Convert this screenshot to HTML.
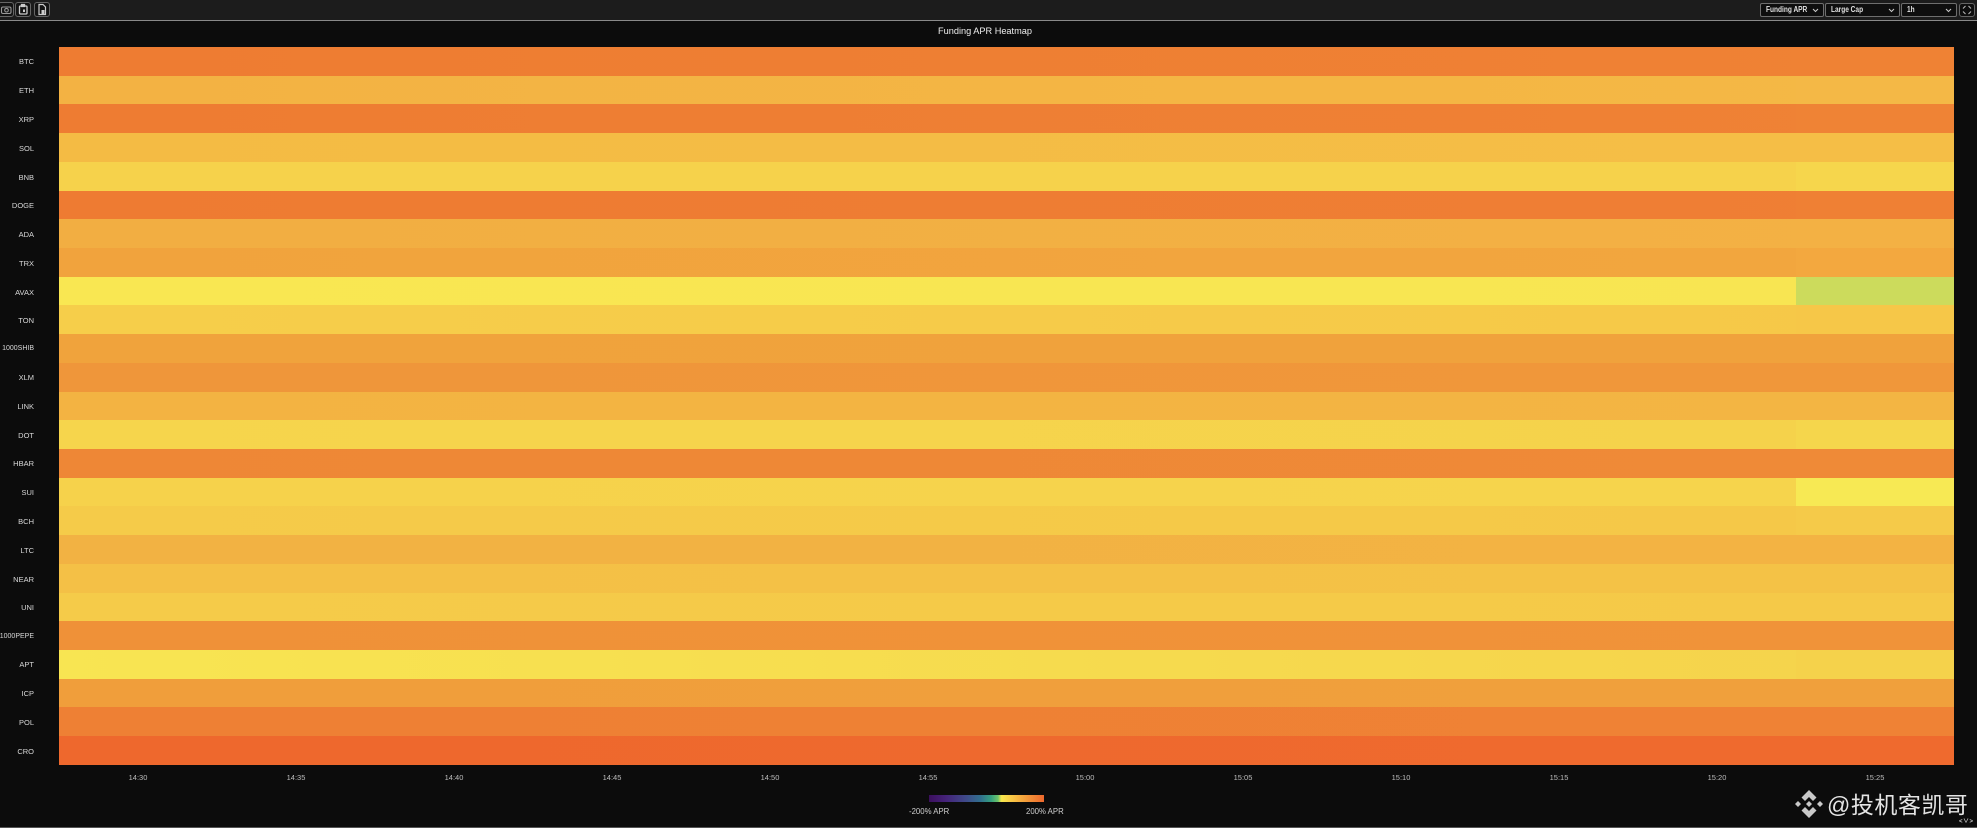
<!DOCTYPE html>
<html><head><meta charset="utf-8"><style>
html,body{margin:0;padding:0;background:#0c0c0c}
body{width:1977px;height:828px;position:relative;overflow:hidden;font-family:"Liberation Sans","Noto Sans CJK SC",sans-serif;color:#ddd}
.top{position:absolute;left:0;top:0;width:1977px;height:20px;background:#1c1c1c;border-bottom:1px solid #8a8a8a;box-sizing:content-box}
.btn{position:absolute;top:2px;height:13px;width:14px;border:1px solid #666;border-radius:3px;background:#141414}
.btn svg{position:absolute;left:0;top:0}
.dd{position:absolute;top:3px;height:12px;border:1px solid #6e6e6e;border-radius:2px;background:#0e0e0e;font-size:8px;line-height:12px;font-weight:bold;color:#e0e0e0;padding-left:5px;box-sizing:content-box}
.dd span{display:inline-block;transform:scaleX(.82);transform-origin:left center;white-space:nowrap}
.dd svg{position:absolute;top:4px}
.title{position:absolute;left:885px;width:200px;top:25px;text-align:center;font-size:9.2px;line-height:13px;color:#efefef}
.hm{position:absolute;left:59px;top:47px;width:1895px;height:718px}
.r{position:absolute;left:0;width:1895px;height:29px}
.r i{position:absolute;right:0;top:0;width:158px;height:100%;display:block}
.l{position:absolute;right:1943px;font-size:7.5px;line-height:10px;color:#d8d8d8;white-space:nowrap}
.t{position:absolute;top:773px;width:40px;text-align:center;font-size:7.5px;line-height:10px;color:#bdbdbd}
.leg{position:absolute;left:929px;top:795px;width:115px;height:7px;background:linear-gradient(90deg,#3c0f5e 0%,#45237a 15%,#3f4a8a 32%,#31708e 45%,#35a07f 54%,#6cc46a 60%,#f8e84e 63%,#f9c846 72%,#f39a3a 85%,#ee682d 100%)}
.ll{position:absolute;top:807px;font-size:7.8px;line-height:10px;color:#cfcfcf;white-space:nowrap}
.wm{position:absolute;left:1827px;top:790px;font-size:23px;line-height:30px;color:#e4e4e4;white-space:nowrap;letter-spacing:.5px}
.bot{position:absolute;left:0;top:827px;width:1977px;height:1px;background:#555}
.nav{position:absolute;left:1959px;top:818px;font-size:6px;line-height:8px;color:#ccc;font-weight:bold;letter-spacing:.5px}
</style></head><body>
<div class="top"></div>
<div class="btn" style="left:-2px"><svg width="14" height="13" viewBox="0 0 14 13" fill="none" stroke="#999" stroke-width="1.1"><rect x="2.500" y="4" width="9.500" height="6.500" rx="1.500"/><circle cx="7.500" cy="7.200" r="1.800"/></svg></div>
<div class="btn" style="left:15px"><svg width="14" height="13" viewBox="0 0 14 13" fill="none" stroke="#ccc" stroke-width="1.3"><rect x="3.500" y="3" width="7.500" height="8" rx="1"/><path d="M5.500 1.500h3v2h-3z" fill="#ccc"/><path d="M7 6.500h2v2.500H7z" fill="#ccc" stroke="none"/></svg></div>
<div class="btn" style="left:34px"><svg width="14" height="13" viewBox="0 0 14 13" fill="none" stroke="#ccc" stroke-width="1.2"><path d="M4 1.500h4l2.500 2.500v7.500H4z"/><path d="M6.500 7h3v4h-3z" fill="#ccc" stroke="none"/></svg></div>

<div class="dd" style="left:1760px;width:57px"><span>Funding APR</span><svg style="left:51px" width="7" height="5" viewBox="0 0 7 5" fill="none" stroke="#ccc" stroke-width="1"><path d="M1 1l2.500 2.500L6 1"/></svg></div>
<div class="dd" style="left:1825px;width:68px"><span>Large Cap</span><svg style="left:62px" width="7" height="5" viewBox="0 0 7 5" fill="none" stroke="#ccc" stroke-width="1"><path d="M1 1l2.500 2.500L6 1"/></svg></div>
<div class="dd" style="left:1901px;width:49px"><span>1h</span><svg style="left:43px" width="7" height="5" viewBox="0 0 7 5" fill="none" stroke="#ccc" stroke-width="1"><path d="M1 1l2.500 2.500L6 1"/></svg></div>
<div class="btn" style="left:1959px;top:3px;height:12px;background:#0e0e0e"><svg width="14" height="12" viewBox="0 0 14 12" fill="none" stroke="#bbb" stroke-width="1"><path d="M3 4.500l2.500-2.500M8.500 2L11 4.500M3 7.500L5.500 10M11 7.500L8.500 10"/></svg></div>

<div class="title">Funding APR Heatmap</div>

<div class="hm">
<div class="r" style="top:0;height:29px;background:linear-gradient(90deg,#ee7c32,#ef8234)"><i style="background:#ef8234"></i></div>
<div class="r" style="top:29px;background:linear-gradient(90deg,#f3b243,#f4b845)"><i style="background:#f4b846"></i></div>
<div class="r" style="top:57px;background:linear-gradient(90deg,#ee7c32,#ef8235)"><i style="background:#ef8335"></i></div>
<div class="r" style="top:86px;background:linear-gradient(90deg,#f4bb44,#f5be46)"><i style="background:#f5be46"></i></div>
<div class="r" style="top:115px;background:linear-gradient(90deg,#f6d24b,#f6d24b)"><i style="background:#f6d64c"></i></div>
<div class="r" style="top:144px;background:linear-gradient(90deg,#ee7b32,#ef7f34)"><i style="background:#ef8034"></i></div>
<div class="r" style="top:172px;background:linear-gradient(90deg,#f2ae42,#f3b144)"><i style="background:#f3b144"></i></div>
<div class="r" style="top:201px;background:linear-gradient(90deg,#f1a33d,#f2a63e)"><i style="background:#f3a83f"></i></div>
<div class="r" style="top:230px;background:linear-gradient(90deg,#f9e752,#f8e552)"><i style="background:#ccdb5c"></i></div>
<div class="r" style="top:258px;background:linear-gradient(90deg,#f6ce4a,#f6c848)"><i style="background:#f6c748"></i></div>
<div class="r" style="top:287px;background:linear-gradient(90deg,#f0a33c,#f0a23c)"><i style="background:#f0a23c"></i></div>
<div class="r" style="top:316px;background:linear-gradient(90deg,#ef963a,#f0973a)"><i style="background:#f0973a"></i></div>
<div class="r" style="top:345px;background:linear-gradient(90deg,#f3b342,#f3b543)"><i style="background:#f3b543"></i></div>
<div class="r" style="top:373px;background:linear-gradient(90deg,#f6d54c,#f5d24b)"><i style="background:#f5d64c"></i></div>
<div class="r" style="top:402px;background:linear-gradient(90deg,#ee8736,#ef8a37)"><i style="background:#ef8a37"></i></div>
<div class="r" style="top:431px;background:linear-gradient(90deg,#f6d24b,#f6d44c)"><i style="background:#f7e954"></i></div>
<div class="r" style="top:459px;background:linear-gradient(90deg,#f5cb49,#f5c848)"><i style="background:#f5ca49"></i></div>
<div class="r" style="top:488px;background:linear-gradient(90deg,#f2b243,#f3b343)"><i style="background:#f3b343"></i></div>
<div class="r" style="top:517px;background:linear-gradient(90deg,#f4c046,#f4c246)"><i style="background:#f4c246"></i></div>
<div class="r" style="top:546px;background:linear-gradient(90deg,#f5cb49,#f5c948)"><i style="background:#f5c948"></i></div>
<div class="r" style="top:574px;background:linear-gradient(90deg,#ef9138,#f09339)"><i style="background:#f09339"></i></div>
<div class="r" style="top:603px;background:linear-gradient(90deg,#f8e552,#f5d24b)"><i style="background:#f5d24b"></i></div>
<div class="r" style="top:632px;background:linear-gradient(90deg,#f09e3b,#f0a03c)"><i style="background:#f0a03c"></i></div>
<div class="r" style="top:660px;background:linear-gradient(90deg,#ee8034,#ef8235)"><i style="background:#ef8235"></i></div>
<div class="r" style="top:689px;background:linear-gradient(90deg,#ee682d,#ef6a2e)"><i style="background:#ef6a2e"></i></div>
</div>

<div class="l" style="top:57px">BTC</div>
<div class="l" style="top:86px">ETH</div>
<div class="l" style="top:115px">XRP</div>
<div class="l" style="top:144px">SOL</div>
<div class="l" style="top:173px">BNB</div>
<div class="l" style="top:201px">DOGE</div>
<div class="l" style="top:230px">ADA</div>
<div class="l" style="top:259px">TRX</div>
<div class="l" style="top:288px">AVAX</div>
<div class="l" style="top:316px">TON</div>
<div class="l" style="top:344px;font-size:7px">1000SHIB</div>
<div class="l" style="top:373px">XLM</div>
<div class="l" style="top:402px">LINK</div>
<div class="l" style="top:431px">DOT</div>
<div class="l" style="top:459px">HBAR</div>
<div class="l" style="top:488px">SUI</div>
<div class="l" style="top:517px">BCH</div>
<div class="l" style="top:546px">LTC</div>
<div class="l" style="top:575px">NEAR</div>
<div class="l" style="top:603px">UNI</div>
<div class="l" style="top:632px;font-size:7px">1000PEPE</div>
<div class="l" style="top:660px">APT</div>
<div class="l" style="top:689px">ICP</div>
<div class="l" style="top:718px">POL</div>
<div class="l" style="top:747px">CRO</div>

<div class="t" style="left:118px">14:30</div>
<div class="t" style="left:276px">14:35</div>
<div class="t" style="left:434px">14:40</div>
<div class="t" style="left:592px">14:45</div>
<div class="t" style="left:750px">14:50</div>
<div class="t" style="left:908px">14:55</div>
<div class="t" style="left:1065px">15:00</div>
<div class="t" style="left:1223px">15:05</div>
<div class="t" style="left:1381px">15:10</div>
<div class="t" style="left:1539px">15:15</div>
<div class="t" style="left:1697px">15:20</div>
<div class="t" style="left:1855px">15:25</div>

<div class="leg"></div>
<div class="ll" style="left:909px">-200% APR</div>
<div class="ll" style="left:1026px">200% APR</div>

<svg style="position:absolute;left:1795px;top:790px" width="28" height="28" viewBox="0 0 28 28" fill="#c9c9c9"><path d="M14 0l7.500 7.500-3.500 3.500-4-4-4 4-3.500-3.500z"/><path d="M14 28l7.500-7.500-3.500-3.500-4 4-4-4-3.500 3.500z"/><path d="M0 14l3-3 3 3-3 3z"/><path d="M28 14l-3-3-3 3 3 3z"/><path d="M14 11l3 3-3 3-3-3z"/></svg>
<div class="wm">@投机客凯哥</div>
<div class="nav">&lt;∨&gt;</div>
<div class="bot"></div>
</body></html>
